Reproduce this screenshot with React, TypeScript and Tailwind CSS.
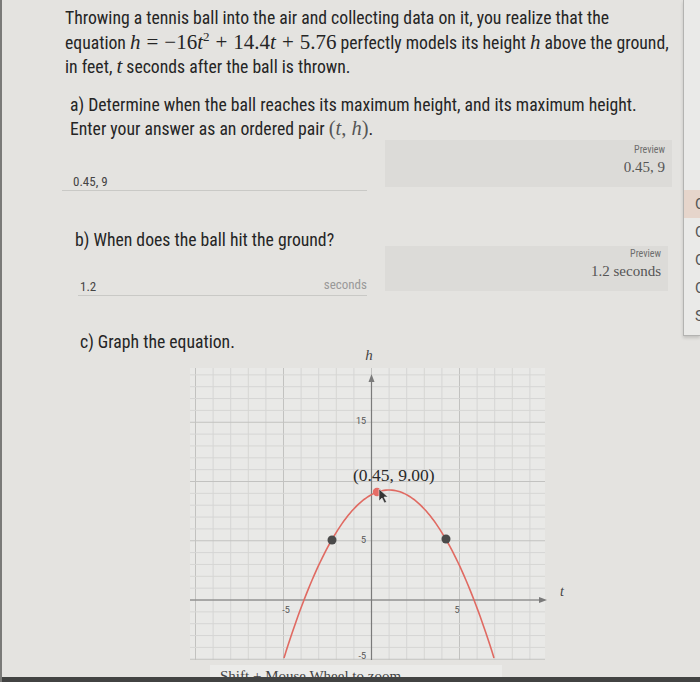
import React from 'react';

const sans = "font-['Liberation_Sans_Narrow','Roboto_Condensed',Roboto,sans-serif]";
const serif = "font-['Liberation_Serif',serif]";

const M = ({ children, className = 'text-[19.5px]' }: { children: React.ReactNode; className?: string }) => (
  <span className={`${serif} ${className}`}>{children}</span>
);
const V = ({ children }: { children: React.ReactNode }) => <i className={serif}>{children}</i>;
const Op = ({ children }: { children: React.ReactNode }) => <span className="mx-[6px]">{children}</span>;

// graph drawn in page coordinates, svg placed at (160, 345)
const OX = 160;
const OY = 345;
const AX = 369.5;
const AY = 600;
const SX = 17.6;
const SY = 11.85;

const Graph = () => {
  const vlines = [];
  for (let i = -10; i <= 10; i++) {
    const x = AX + SX * i;
    if (x < 188 || x > 543) continue;
    vlines.push(
      <line key={'v' + i} x1={x} y1={368} x2={x} y2={660} stroke={i % 5 === 0 ? '#c2c2c0' : '#d6d6d4'} strokeWidth={1} />
    );
  }
  const hlines = [];
  for (let u = -5; u <= 19; u++) {
    const y = AY - SY * u;
    hlines.push(
      <line key={'h' + u} x1={188} y1={y} x2={543} y2={y} stroke={u % 5 === 0 ? '#c2c2c0' : '#d6d6d4'} strokeWidth={1} />
    );
  }
  let d = '';
  for (let x = 280; x <= 494; x += 2) {
    const y = 490 + 110 * Math.pow((x - 387) / 85, 2);
    if (y > 663) continue;
    d += (d ? ' L' : 'M') + x + ' ' + y.toFixed(1);
  }
  return (
    <svg width={420} height={320} className="block ml-[160px] -mt-[10px]">
      <g transform={`translate(${-OX},${-OY})`}>
        <rect x={188} y={368} width={355} height={292} fill="#e9e9e7" />
        {vlines}
        {hlines}
        <line x1={188} y1={AY} x2={540} y2={AY} stroke="#7a7a7a" strokeWidth={1.2} />
        <polygon points="545,600 537,597 537,603" fill="#7a7a7a" />
        <line x1={AX} y1={380} x2={AX} y2={660} stroke="#7a7a7a" strokeWidth={1.2} />
        <polygon points="369.5,374 366.5,382 372.5,382" fill="#7a7a7a" />
        <g fontFamily="Roboto, sans-serif" fontSize={9} fill="#555">
          <text x={364} y={424} textAnchor="end">15</text>
          <text x={364} y={543} textAnchor="end">5</text>
          <text x={364} y={659} textAnchor="end">-5</text>
          <text x={284} y={613} textAnchor="middle">-5</text>
          <text x={455} y={613} textAnchor="middle">5</text>
        </g>
        <text x={367} y={360} fontFamily="'Liberation Serif', serif" fontStyle="italic" fontSize={15} fill="#444" textAnchor="middle">h</text>
        <text x={560} y={596} fontFamily="'Liberation Serif', serif" fontStyle="italic" fontSize={14} fill="#444" textAnchor="middle">t</text>
        <path d={d} fill="none" stroke="#e06a62" strokeWidth={1.6} />
        <circle cx={330} cy={540} r={4.5} fill="#4a4a4a" />
        <circle cx={444} cy={539} r={4.5} fill="#4a4a4a" />
        <circle cx={375} cy={492} r={4.2} fill="#e66c66" />
        <polygon points="377,489 377,501 380,498 382.5,503 384.5,502 382,497 386,497" fill="#333" stroke="#eee" strokeWidth={0.6} />
        <text x={351} y={481} fontFamily="'Liberation Serif', serif" fontSize={17.5} fill="#2a2a2a">(0.45, 9.00)</text>
      </g>
    </svg>
  );
};

const Preview = ({ value, top, width }: { value: string; top: string; width: string }) => (
  <div className={`${width} ${top} bg-[#dcdbd8] flex flex-col items-end pr-[7px]`}>
    <span className={`${sans} text-[10px] leading-[10px] text-[#6d6d6d]`}>Preview</span>
    <span className={`${serif} text-[15px] leading-[18px] mt-[3px] text-[#555]`}>{value}</span>
  </div>
);

export default function App() {
  return (
    <div className={`w-[700px] h-[682px] overflow-hidden bg-[#e4e3e0] border-l-2 border-[#7a7a78] flex flex-col ${sans} text-[#252525]`}>
      <div className="flex items-start h-[677px] shrink-0 overflow-hidden">
        <div className="w-[681px] shrink-0">
          <p className="pt-[6px] pl-[63px] text-[17.7px] leading-[24.5px] whitespace-nowrap">
            Throwing a tennis ball into the air and collecting data on it, you realize that the
            <br />
            equation{' '}
            <M className="text-[21px] leading-[20px]">
              <V>h</V>
              <Op>=</Op>−16<V>t</V>
              <sup className="text-[13px] top-[-8px]">2</sup>
              <Op>+</Op>14.4<V>t</V>
              <Op>+</Op>5.76
            </M>{' '}
            perfectly models its height <M className="text-[21px] leading-[20px]"><V>h</V></M> above the ground,
            <br />
            in feet, <M className="text-[21px] leading-[20px]"><V>t</V></M> seconds after the ball is thrown.
          </p>

          <p className="mt-[13px] pl-[68px] text-[17.7px] leading-[24.5px] whitespace-nowrap">
            a) Determine when the ball reaches its maximum height, and its maximum height.
            <br />
            Enter your answer as an ordered pair{' '}
            <M className="text-[20.5px] leading-[20px] text-[#555]">
              (<V>t</V>, <V>h</V>)
            </M>
            .
          </p>

          <div className="flex items-start -mt-[2px]">
            <div className="ml-[60px] mt-[34px] w-[305px] h-[17px] border-b border-[#c9c9c6] pl-[11px] text-[13px] leading-[16px] text-[#444]">
              0.45, 9
            </div>
            <Preview value="0.45, 9" top="ml-[18px] h-[47px] pt-[5px]" width="w-[287px]" />
          </div>

          <p className="mt-[37px] pl-[73px] text-[17.7px] leading-[25px]">b) When does the ball hit the ground?</p>

          <div className="flex items-start -mt-[7px]">
            <div className="ml-[76px] mt-[33px] w-[289px] h-[17px] border-b border-[#c9c9c6] pl-[2px] text-[13px] leading-[16px] text-[#444] flex justify-between">
              <span>1.2</span>
              <span className="text-[#999] -mt-[2px]">seconds</span>
            </div>
            <Preview value="1.2 seconds" top="ml-[18px] h-[45px] pt-[3px]" width="w-[283px]" />
          </div>

          <p className="mt-[34px] pl-[78px] text-[17.7px] leading-[25px]">c) Graph the equation.</p>

          <Graph />

          <div className={`ml-[208px] w-[292px] h-[18px] bg-[#ebebe9] ${serif} text-[15px] leading-[22px] text-[#444] pl-[10px] whitespace-nowrap`}>
            Shift + Mouse Wheel to zoom
          </div>
        </div>

        <div className="flex-1 h-[336px] bg-[#eaeae8] border-l border-b border-[#b3b3b1] shadow-[0_2px_3px_rgba(0,0,0,0.15)] pt-[190px] overflow-hidden font-['Roboto',sans-serif] text-[15px] text-[#555]">
          <div className="h-[28px] bg-[#e6d5cb] pl-[11px] leading-[28px]">C</div>
          <div className="h-[28px] pl-[11px] leading-[28px]">C</div>
          <div className="h-[28px] pl-[11px] leading-[28px]">C</div>
          <div className="h-[28px] pl-[11px] leading-[28px]">C</div>
          <div className="h-[28px] pl-[11px] leading-[28px]">S</div>
        </div>
      </div>
      <div className="h-[5px] bg-[#424342] shrink-0" />
    </div>
  );
}
